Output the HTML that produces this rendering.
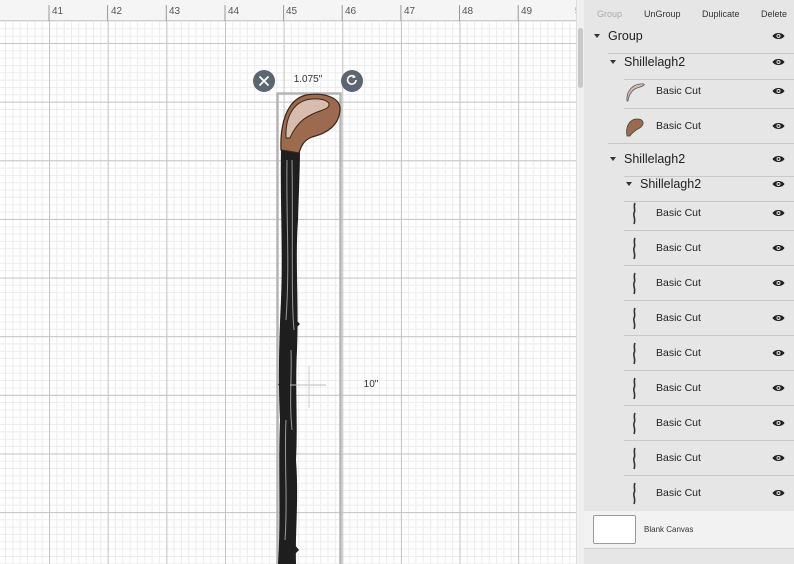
<!DOCTYPE html>
<html><head><meta charset="utf-8"><style>
*{margin:0;padding:0;box-sizing:border-box}
body{width:794px;height:564px;overflow:hidden;position:relative;background:#fff;font-family:"Liberation Sans",sans-serif}
#canvas{position:absolute;left:0;top:0;width:576px;height:564px;
background-color:#fff;
background-image:
linear-gradient(to right,#c4c4c4 1px,transparent 1px),
linear-gradient(to bottom,#c4c4c4 1px,transparent 1px),
linear-gradient(to right,#ececec 1px,transparent 1px),
linear-gradient(to bottom,#ececec 1px,transparent 1px);
background-size:58.65px 58.65px,58.65px 58.65px,7.33px 7.33px,7.33px 7.33px;
background-position:-9.6px 43px,-9.6px 43px,-9.6px 43px,-9.6px 43px}
#ruler{position:absolute;left:0;top:0;width:576px;height:21px;background:#f5f5f5;border-bottom:1px solid #ccc}
#ruler span{position:absolute;top:6px;font-size:10px;color:#555}
#sb{position:absolute;left:576px;top:0;width:8px;height:564px;background:#f0f0f0;border-left:1px solid #ddd}
#sb div{position:absolute;left:1px;top:28px;width:5px;height:60px;background:#c8c8c8;border-radius:3px}
#panel{position:absolute;left:584px;top:0;width:210px;height:564px;background:#e6e6e6}
.tb{position:absolute;top:9px;font-size:9px;color:#333}
.row{position:absolute;left:0;width:210px;height:35px}
.row .t{position:absolute;top:50%;transform:translateY(-50%);color:#222}
.row .ln{position:absolute;bottom:0;right:0;height:1px;background:#c9c9c9}
.eye{position:absolute;right:9px;top:50%;transform:translateY(-50%);width:13px;height:9px}
.tri{position:absolute;top:50%;margin-top:-2px;width:0;height:0;border-left:3px solid transparent;border-right:3px solid transparent;border-top:4px solid #333}
</style></head><body>
<div id="canvas"></div>
<div id="ruler">
<span style="left:52px">41</span><span style="left:111px">42</span><span style="left:169px">43</span><span style="left:228px">44</span><span style="left:286px">45</span><span style="left:345px">46</span><span style="left:404px">47</span><span style="left:462px">48</span><span style="left:521px">49</span><span style="left:575px">50</span>
</div>
<svg width="576" height="564" style="position:absolute;left:0;top:0">
<g stroke="#999" stroke-width="1">
<line x1="49" y1="5" x2="49" y2="21"/><line x1="107.6" y1="5" x2="107.6" y2="21"/><line x1="166.3" y1="5" x2="166.3" y2="21"/><line x1="225" y1="5" x2="225" y2="21"/><line x1="283.6" y1="5" x2="283.6" y2="21"/><line x1="342.2" y1="5" x2="342.2" y2="21"/><line x1="400.9" y1="5" x2="400.9" y2="21"/><line x1="459.5" y1="5" x2="459.5" y2="21"/><line x1="518.2" y1="5" x2="518.2" y2="21"/>
</g>
<rect x="277.5" y="93.5" width="63" height="480" fill="none" stroke="#b5b5b5" stroke-width="2.5"/>
<circle cx="264" cy="81" r="11" fill="#5c6670"/>
<path d="M259.5 76.5l9 9M268.5 76.5l-9 9" stroke="#fff" stroke-width="1.8"/>
<circle cx="352" cy="81" r="11" fill="#5c6670"/>
<path d="M356 80a4.2 4.2 0 1 1-1.5-3.3" fill="none" stroke="#fff" stroke-width="1.6"/>
<path d="M353 74.5l3 2.8-3.6 1" fill="#fff"/>
<text x="308" y="82" font-size="10" fill="#333" text-anchor="middle" font-family="Liberation Sans">1.075"</text>
<text x="371" y="387" font-size="10" fill="#333" text-anchor="middle" font-family="Liberation Sans">10"</text>
<path d="M281 150 C280 200 283 250 281 300 C279 340 278 380 280 420 C278 470 281 520 278 564 L296 564 C295 530 299 500 296 460 C298 420 295 390 297 350 C299 300 295 260 298 220 C299 190 300 165 300 150 Z" fill="#1e1e1e"/>
<path d="M278 385 l4 -6 l3 8 Z M296 320 l4 4 l-4 4 Z M295 545 l4 5 l-4 4Z" fill="#1e1e1e"/>
<path d="M287 160 C286 220 290 260 286 320 M292 160 C293 220 291 300 294 330 M286 420 C284 460 288 500 285 540 M291 350 C292 380 289 400 292 430" stroke="#9a9a9a" stroke-width="1" fill="none"/>
<path d="M281 150 C280 125 286 100 306 95 C325 92 341 98 340 110 C339 125 328 133 312 137 C304 140 301 146 299 153 Z" fill="#9b6a4f" stroke="#3a2418" stroke-width="1.2"/>
<path d="M286 138 C285 115 295 100 312 99 C325 98 333 103 327 108 C318 113 300 114 290 138 Z" fill="#d8bcae" stroke="#3a2418" stroke-width="1"/>
<line x1="290" y1="385" x2="326" y2="385" stroke="#bbb"/><line x1="309" y1="366" x2="309" y2="408" stroke="#ccc"/>
</svg>
<div id="sb"><div></div></div>
<div id="panel">
<div class="tb" style="left:13px;color:#aaa">Group</div>
<div class="tb" style="left:60px">UnGroup</div>
<div class="tb" style="left:118px">Duplicate</div>
<div class="tb" style="left:177px">Delete</div>
<div id="rows"></div>
<div style="position:absolute;left:0;top:511px;width:210px;height:37px;background:#f2f2f2">
<div style="position:absolute;left:9px;top:4px;width:43px;height:29px;background:#fff;border:1px solid #999;border-radius:2px"></div>
<div style="position:absolute;left:60px;top:14px;font-size:8px;color:#333">Blank Canvas</div>
</div>
<div style="position:absolute;left:0;top:548px;width:210px;height:16px;background:#e6e6e6;border-top:1px solid #d0d0d0"></div>
</div>
<script>
var R=[["Group",8,24,13,36,1],["Shillelagh2",24,40,29,62,1],["Basic Cut",40,72,0,91,2],["Basic Cut",40,72,0,126,3],["Shillelagh2",24,40,29,159,1],["Shillelagh2",40,56,45,184,1]];
for(var i=0;i<9;i++)R.push(["Basic Cut",40,72,0,213+35*i,4]);
var h="";
var eye='<svg class="eye" viewBox="0 0 13 9"><path d="M0.5 4.5C3 0.5 10 0.5 12.5 4.5C10 8.5 3 8.5 0.5 4.5Z" fill="#222"/><circle cx="6.5" cy="4.5" r="2" fill="#e6e6e6"/><circle cx="6.5" cy="4.5" r="1" fill="#222"/></svg>';
R.forEach(function(r,i){
 var top=r[4]-17.5, next=(i+1<R.length)?R[i+1]:null;
 var lnL=next?next[1]:40;
 var big=r[5]==1;
 h+='<div class="row" style="top:'+top+'px">';
 if(r[3])h+='<div class="tri" style="left:'+(r[3]-3)+'px"></div>';
 h+='<div class="t" style="left:'+r[2]+'px;font-size:'+(big?12.5:10.5)+'px">'+r[0]+'</div>';
 if(r[5]==2)h+='<svg style="position:absolute;left:40px;top:7px" width="22" height="22"><path d="M3 20C2 9 10 2 20 3C21 5 16 6 13 7C8 9 5 13 4 20Z" fill="#d8bcae" stroke="#555" stroke-width=".8"/></svg>';
 if(r[5]==3)h+='<svg style="position:absolute;left:40px;top:7px" width="22" height="22"><path d="M3 20C1 9 7 3 13 3C19 3 21 7 17 11C13 14 9 15 6 20Z" fill="#9b6a4f" stroke="#444" stroke-width=".8"/></svg>';
 if(r[5]==4)h+='<svg style="position:absolute;left:47px;top:6px" width="8" height="23"><path d="M4 1C2 5 5 8 3 11C2 14 5 17 3 22" stroke="#333" stroke-width="1.6" fill="none"/></svg>';
 h+=eye;
 if(i<R.length-1)h+='<div class="ln" style="left:'+lnL+'px"></div>';
 h+='</div>';
});
document.getElementById('rows').innerHTML=h;
</script>
</body></html>
